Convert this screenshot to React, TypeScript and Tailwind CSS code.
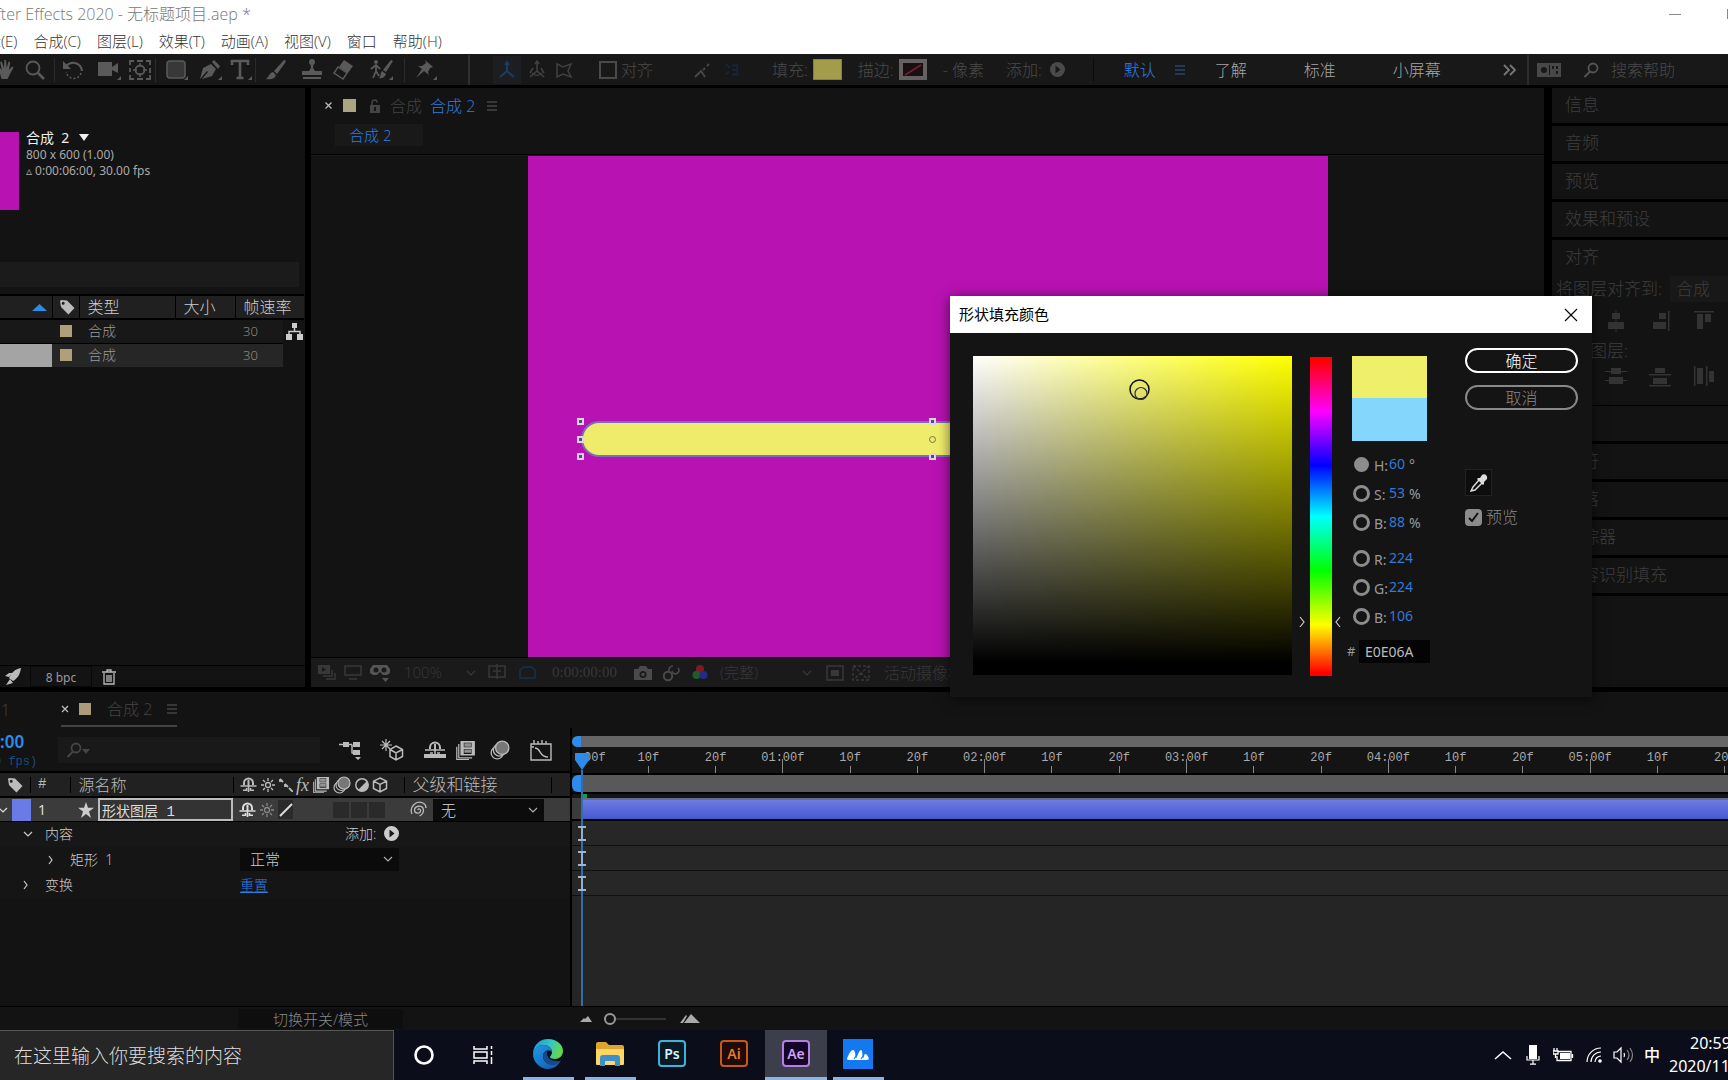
import React from "react";

type IconProps = {
  w?: number;
  h?: number;
  vb?: string;
  className?: string;
  children: React.ReactNode;
};

function Icon({ w = 20, h = 20, vb = "0 0 20 20", className = "", children }: IconProps) {
  return (
    <svg width={w} height={h} viewBox={vb} fill="none" stroke="currentColor" strokeWidth="1.5" className={`block shrink-0 ${className}`} aria-hidden="true">
      {children}
    </svg>
  );
}

const solid = { fill: "currentColor", stroke: "none" };

/* ---------- shared glyphs ---------- */

const Chevron = ({ dir = "down", className = "" }: { dir?: "down" | "right"; className?: string }) => (
  <Icon w={10} h={10} vb="0 0 10 10" className={className}>
    {dir === "down" ? <path d="M1 3l4 4 4-4" strokeWidth="1.2" /> : <path d="M3 1l3 4-3 4" strokeWidth="1.2" />}
  </Icon>
);

const Burger = ({ className = "" }: { className?: string }) => (
  <Icon w={10} h={10} vb="0 0 10 10" className={className}>
    <path d="M0 1h10M0 5h10M0 9h10" strokeWidth="1.4" />
  </Icon>
);

const TagIcon = ({ className = "" }: { className?: string }) => (
  <Icon w={16} h={16} vb="0 0 16 16" className={className}>
    <path {...solid} fillRule="evenodd" d="M1 2l1-1 6 .6L15.5 9 9.5 15.5 2 8zM4.2 2.8a1.5 1.5 0 100 3 1.5 1.5 0 000-3z" />
  </Icon>
);

const ShyIcon = () => (
  <Icon w={17} h={16} vb="0 0 17 16">
    <path d="M4 8V6a4.500 4.500 0 019 0v2" strokeWidth="2" />
    <path {...solid} d="M7.500 3h2v6h-2z" />
    <path d="M0.500 9h16M8.500 9v6M3 13.300h3.500V11M14 13.300h-3.500V11" strokeWidth="1.600" />
  </Icon>
);

const SunIcon = ({ className = "" }: { className?: string }) => (
  <Icon w={14} h={14} vb="0 0 14 14" className={className}>
    <circle cx="7" cy="7" r="2.5" strokeWidth="1.3" />
    <path d="M7 0v3M7 11v3M0 7h3M11 7h3M2 2l2 2M10 10l2 2M12 2l-2 2M4 10l-2 2" strokeWidth="1.3" />
  </Icon>
);

const FilmIcon = ({ size = 17 }: { size?: number }) => (
  <Icon w={size} h={size} vb="0 0 18 18">
    <path {...solid} fillRule="evenodd" d="M4 1h13v13H4zM7 2.5v4h7v-4zM7 8v4.500h7V8z" />
    <path d="M7.5 4.500h6M7.5 10h6" strokeWidth="3" opacity=".75" />
    <path d="M2.500 3.500v12.500h12M.7 6v11.700h11" strokeWidth="1.1" />
  </Icon>
);

const BlurIcon = ({ size = 18 }: { size?: number }) => (
  <Icon w={size} h={size} vb="0 0 18 18">
    <circle cx="6.5" cy="11.5" r="5.5" strokeWidth="1.2" />
    <circle cx="8.5" cy="9" r="5.5" strokeWidth="1.2" fill="#1c1c1c" />
    <circle cx="11" cy="7" r="6" fill="#777" strokeWidth="1.2" />
  </Icon>
);

const CubeIcon = ({ size = 16 }: { size?: number }) => (
  <Icon w={size} h={size} vb="0 0 16 16">
    <path d="M8 1l6.500 3.200v7.300L8 15l-6.500-3.500V4.200zM1.500 4.200L8 7.500l6.500-3.300M8 7.500V15" />
  </Icon>
);

const Search = ({ className = "" }: { className?: string }) => (
  <Icon w={16} h={16} vb="0 0 16 16" className={className}>
    <circle cx="10" cy="6" r="4.500" strokeWidth="1.8" />
    <path d="M7 9.500L1.500 15" strokeWidth="2" />
  </Icon>
);

const PlayDisc = ({ className = "" }: { className?: string }) => (
  <Icon w={15} h={15} vb="0 0 15 15" className={className}>
    <path {...solid} fillRule="evenodd" d="M7.500 0a7.500 7.500 0 100 15 7.500 7.500 0 000-15zM5.500 3.500l5 4-5 4z" />
  </Icon>
);

/* ---------- window title and menus ---------- */

const menus = ["合成(C)", "图层(L)", "效果(T)", "动画(A)", "视图(V)", "窗口", "帮助(H)"];

function TitleArea() {
  return (
    <header className="h-[54px] shrink-0 overflow-hidden bg-white">
      <div className="flex h-7 items-center justify-between">
        <h1 className="-ml-1 whitespace-nowrap font-['Open_Sans','Noto_Sans_CJK_SC',sans-serif] text-[16px] font-light text-[#777]">
          fter Effects 2020 - 无标题项目.aep *
        </h1>
        <div className="flex items-center text-[#888]">
          <button aria-label="最小化" className="mr-[46px] h-px w-3 bg-[#888]" />
          <button aria-label="最大化" className="h-2.5 w-px bg-[#888]" />
        </div>
      </div>
      <nav className="flex h-[26px] items-center gap-4 whitespace-nowrap text-[15px] font-light text-[#333]">
        <button className="-ml-[14px]">辑(E)</button>
        {menus.map((m) => (
          <button key={m}>{m}</button>
        ))}
      </nav>
    </header>
  );
}

/* ---------- toolbar ---------- */

const Corner = () => <path {...solid} d="M24 21v-4l-4 4z" />;

const ToolDivider = () => <div className="h-6 w-px shrink-0 bg-[#2b2b2b]" />;

function Tool({ label, children, className = "w-[31px]" }: { label: string; children: React.ReactNode; className?: string }) {
  return (
    <button aria-label={label} className={`flex shrink-0 items-center justify-center ${className}`}>
      <Icon w={24} h={22} vb="0 0 24 22">
        {children}
      </Icon>
    </button>
  );
}

function Toolbar() {
  return (
    <div className="flex h-[34px] shrink-0 items-center overflow-hidden whitespace-nowrap border-b-[3px] border-black bg-[#181818] text-[16px] font-light text-[#4a4a4a]">
      <div className="flex w-[493px] shrink-0 items-center text-[#5a5a5a]">
        <Tool label="手形工具" className="-ml-1 w-5">
          <path {...solid} d="M5 11L3 8l1.500-1L8 11 6 3l1.800-.4L10 9l.3-8h1.800l.5 8 2-6.500 1.600.6L15 11l3-3.500 1.500 1L16 15l-2.500 5h-6z" />
        </Tool>
        <Tool label="缩放工具" className="w-[38px]">
          <circle cx="10" cy="9" r="6.500" strokeWidth="1.8" />
          <path d="M15 14l6 6" strokeWidth="2.5" />
        </Tool>
        <ToolDivider />
        <Tool label="旋转工具" className="w-[38px]">
          <path d="M4 7c6-6 15-3 16 5" strokeWidth="2" />
          <path {...solid} d="M1 2v8h8z" />
          <path d="M19 14c-2 7-12 8-15-1" strokeDasharray="2 2" />
        </Tool>
        <Tool label="摄像机工具">
          <path {...solid} d="M1 3h14v5l6-4v10l-6-3v6H1z" />
          <Corner />
        </Tool>
        <Tool label="锚点工具">
          <path d="M2 6V2h4M9 2h6M18 2h4v4M22 9v5M22 16v4h-4M15 20H9M6 20H2v-4M2 13V9" strokeWidth="1.8" />
          <circle cx="12" cy="11" r="4.500" strokeWidth="1.8" />
          <path d="M12 4v4M12 14v4M5 11h4M15 11h4" />
        </Tool>
        <ToolDivider />
        <Tool label="矩形工具" className="w-[39px]">
          <rect x="3" y="2" width="18" height="17" rx="3" fill="#383838" />
          <Corner />
        </Tool>
        <Tool label="钢笔工具" className="w-[30px]">
          <path {...solid} d="M2 20L5 9l8-4 5 5-4 7-10 3 6-7-1-1-6 7zM14 3l2-2 6 6-2 3z" />
          <Corner />
        </Tool>
        <Tool label="文字工具" className="w-[30px]">
          <path d="M4 6V2h16v4M12 2v17M8.500 19h7" strokeWidth="2.6" />
          <Corner />
        </Tool>
        <ToolDivider />
        <Tool label="画笔工具" className="w-10">
          <path {...solid} d="M20 1c2 0 2 1 1 3l-8 11-3-3zM9 13l3 3c-1 4-5 5-10 4 3-2 3-6 7-7z" />
        </Tool>
        <Tool label="仿制图章工具">
          <path {...solid} d="M10 1h4l-1 8 2 3h7v4H2v-4h7l2-3zM3 18h18v2H3z" />
          <circle {...solid} cx="12" cy="3" r="3" />
        </Tool>
        <Tool label="橡皮擦工具">
          <path {...solid} d="M13 1l9 6-5 7-9-6z" />
          <path d="M7 8l9 6-4 6-9-6z" />
        </Tool>
        <Tool label="Roto 笔刷工具" className="w-[46px]">
          <circle {...solid} cx="7" cy="3" r="2" />
          <path d="M7 6v6l-3 7M7 12l3 5M2 10l5-4 4 4" strokeWidth="1.8" />
          <path {...solid} d="M22 1l2 1-7 11-3-2zM13 12l4 3c-1 3-4 5-7 4 2-1 1-5 3-7z" />
          <Corner />
        </Tool>
        <ToolDivider />
        <Tool label="人偶位控点工具" className="w-[39px]">
          <path {...solid} d="M12 1l8 7-3 1-2 4 1 3-5-4-8 7 6-9-4-3 4 0 4-3z" />
          <Corner />
        </Tool>
        <div className="ml-6 h-[30px] w-0.5 bg-[#303030]" />
      </div>
      <div className="flex w-[106px] shrink-0 items-center gap-1.5 text-[#404040]">
        <button aria-label="本地轴模式" className="flex h-7 w-7 items-center justify-center bg-[#1c1e22] text-[#1c3c60]">
          <Icon w={20}><path d="M10 2v9l-7 6M10 11l7 6M8 5l2-3 2 3" strokeWidth="2" /></Icon>
        </button>
        <button aria-label="世界轴模式">
          <Icon><path d="M10 2v9l-7 6M10 11l7 6M8 4l2-3 2 3M5 13c3 3 7 3 10 0M6 8l-3 5M14 8l3 5" strokeWidth="1.6" /></Icon>
        </button>
        <button aria-label="视图轴模式">
          <Icon w={22}><path d="M3 4l6 3 8-3-3 7 3 6-8-3-6 3z" /></Icon>
        </button>
      </div>
      <label className="flex w-[94px] shrink-0 items-center gap-1">
        <input type="checkbox" className="h-[18px] w-[18px] appearance-none border-2 border-[#4a4a4a] bg-transparent" />
        对齐
      </label>
      <div className="flex w-[79px] shrink-0 items-center gap-2.5">
        <Icon w={20}><path d="M2 17l6-6 4 6M10 10l2-2M14 6l2-2" strokeWidth="1.8" /></Icon>
        <Icon w={18} className="text-[#16263a]"><path d="M3 3l5 5M3 15l4-3M10 5h6v10h-6M10 10h5" strokeWidth="2" /></Icon>
      </div>
      <div className="flex shrink-0 items-center">
        <span>填充:</span>
        <button aria-label="填充颜色" className="ml-[5px] h-[21px] w-[29px] border border-[#837f4a] bg-[#a39c4b]" />
        <span className="ml-4">描边:</span>
        <button aria-label="描边颜色" className="ml-[5px] flex h-[21px] w-[28px] items-center justify-center border-4 border-[#656062] bg-[#181012]">
          <Icon w={20} h={12} vb="0 0 20 12" className="text-[#722330]"><path d="M2 11L18 1" /></Icon>
        </button>
        <span className="ml-4">- 像素</span>
        <span className="ml-[22px]">添加:</span>
        <PlayDisc className="ml-2" />
      </div>
      <div className="ml-7 h-6 w-px bg-[#0c0c0c]" />
      <nav className="ml-[30px] flex shrink-0 items-center text-[#a6a6a6]">
        <button className="text-[#2d7fe0]">默认</button>
        <Burger className="ml-[19px] text-[#24466c]" />
        <button className="ml-[30px]">了解</button>
        <button className="ml-[57px]">标准</button>
        <button className="ml-[57px]">小屏幕</button>
      </nav>
      <div className="ml-auto flex w-[225px] shrink-0 items-center">
        <Icon w={14} h={12} vb="0 0 14 12" className="text-[#777]"><path d="M1 1l5 5-5 5M7 1l5 5-5 5" strokeWidth="1.8" /></Icon>
        <div className="ml-2.5 h-[30px] w-0.5 bg-[#2c2c2c]" />
        <Icon w={24} h={14} vb="0 0 24 14" className="ml-2 text-[#484848]">
          <path {...solid} fillRule="evenodd" d="M0 0h24v14H0zM4 7a3 3 0 106 0 3 3 0 00-6 0zM12 2v10h1V2zM15 3v3h2V3zM19 8v3h2V8zM19 3v3h2V3z" />
        </Icon>
        <Search className="ml-[22px] text-[#555]" />
        <input aria-label="搜索帮助" placeholder="搜索帮助" className="ml-3 w-[100px] bg-transparent text-[16px] font-light outline-none placeholder:text-[#4a4a4a]" />
      </div>
    </div>
  );
}

/* ---------- project panel ---------- */

function ProjectPanel() {
  return (
    <aside className="flex w-[305px] shrink-0 flex-col overflow-hidden bg-[#131313]">
      <div className="mt-[42px] flex items-start">
        <div className="mt-0.5 h-[78px] w-[19px] shrink-0 bg-[#b812b2]" />
        <div className="ml-[7px] font-['Noto_Sans','Noto_Sans_CJK_SC',sans-serif] text-[12px] leading-4 text-[#aaa]">
          <div className="flex h-4 items-center gap-2.5 text-[14px] text-[#eee]">
            <span>合成&nbsp; 2</span>
            <Icon w={10} h={8} vb="0 0 10 8"><path {...solid} d="M0 0h10L5 7z" /></Icon>
          </div>
          <p className="mt-px">800 x 600 (1.00)</p>
          <p>▵ 0:00:06:00, 30.00 fps</p>
        </div>
      </div>
      <input aria-label="搜索项目" className="mt-[52px] h-[25px] w-[299px] bg-[#1b1b1b] outline-none" />
      <table className="mt-[7px] w-[304px] table-fixed border-collapse text-left text-[14px] font-light leading-5 text-[#999]">
        <colgroup>
          <col className="w-[52px]" />
          <col className="w-[27px]" />
          <col className="w-[96px]" />
          <col className="w-[60px]" />
          <col className="w-[48px]" />
          <col className="w-[21px]" />
        </colgroup>
        <thead className="border-y-2 border-black bg-[#202020] text-[16px] text-[#ccc]">
          <tr className="h-[24px]">
            <th aria-label="名称" className="border-r border-black p-0 pl-8">
              <Icon w={15} h={7} vb="0 0 15 7" className="text-[#2d8ceb]"><path {...solid} d="M0 7l7.500-7L15 7z" /></Icon>
            </th>
            <th aria-label="标签" className="border-r border-black p-0 pl-1.5"><TagIcon className="text-[#bbb]" /></th>
            <th className="border-r border-black p-0 pl-2 font-light">类型</th>
            <th className="border-r border-black p-0 pl-2 font-light">大小</th>
            <th colSpan={2} className="p-0 pl-2 font-light">帧速率</th>
          </tr>
        </thead>
        <tbody>
          {[false, true].map((selected, i) => (
            <tr key={i} className="h-6">
              <td className={selected ? "border-t border-black bg-[#a4a4a4] p-0" : "bg-[#181818] p-0"} />
              <td className={selected ? "border-t border-black bg-[#262626] p-0 pl-2" : "bg-[#181818] p-0 pl-2"}>
                <div className="h-3 w-3 bg-[#af9f7b]" />
              </td>
              <td className={selected ? "border-t border-black bg-[#262626] p-0 pl-[9px]" : "bg-[#181818] p-0 pl-[9px]"}>合成</td>
              <td className={selected ? "border-t border-black bg-[#262626] p-0" : "bg-[#181818] p-0"} />
              <td className={selected ? "border-t border-black bg-[#262626] p-0 pl-2 text-[13px]" : "bg-[#181818] p-0 pl-2 text-[13px]"}>30</td>
              <td className="p-0 pl-[3px]">
                {!selected && (
                  <Icon w={17} h={17} vb="0 0 17 17" className="text-[#ccc]">
                    <path {...solid} d="M6 0h5v5H6zM0 11h6v6H0zM11 11h6v6h-6z" />
                    <path d="M8.500 4v5M3 12V8.500h11V12" />
                  </Icon>
                )}
              </td>
            </tr>
          ))}
        </tbody>
      </table>
      <div className="mt-auto flex h-[22px] items-center border-t border-black text-[#bbb]">
        <Icon w={18} h={18} vb="0 0 18 18" className="ml-1">
          <path {...solid} d="M17 0c-1 7-4 11-8 13L5 10C8 4 11 1 17 0zM5 5l3 0-3 4-4-1zM9 15l-3-4-4 6z" />
        </Icon>
        <button className="ml-2 h-[21px] w-[62px] border border-[#080808] pt-0.5 font-['Noto_Sans',sans-serif] text-[12px] leading-4 text-[#999]">8 bpc</button>
        <button aria-label="删除" className="ml-2.5">
          <Icon w={14} h={16} vb="0 0 14 16">
            <path d="M0 3h14M5 2.500V1h4v1.500M2 4v11h10V4M5 6v7M7 6v7M9 6v7" strokeWidth="1.3" />
          </Icon>
        </button>
      </div>
    </aside>
  );
}

/* ---------- composition viewer ---------- */

const Handle = () => <div className="h-[7px] w-[7px] border-2 border-[#d9d5e6] bg-[#554a80]" />;

function CompositionPanel() {
  return (
    <main className="flex min-w-0 flex-1 flex-col overflow-hidden bg-[#131313] text-[16px] font-light">
      <div className="flex h-[35px] shrink-0 items-center pl-3.5 text-[#444]">
        <button aria-label="关闭" className="text-[#bbb]">
          <Icon w={7} h={7} vb="0 0 7 7"><path d="M.5 .5l6 6M6.500 .5l-6 6" strokeWidth="1.3" /></Icon>
        </button>
        <div className="ml-[11px] h-[13px] w-[13px] bg-[#a9a482]" />
        <Icon w={12} h={14} vb="0 0 12 14" className="ml-[13px]">
          <path {...solid} fillRule="evenodd" d="M1 6h10v8H1zM5 8v4h2V8z" />
          <path d="M3 6V3.500a2.500 2.500 0 015 0" />
        </Icon>
        <span className="ml-[9px]">合成</span>
        <span className="ml-2 text-[#2d7fe0]">合成 2</span>
        <Burger className="ml-3" />
      </div>
      <div className="flex h-[32px] shrink-0 items-center border-b border-black pb-2 pl-6">
        <button className="h-[22px] w-[88px] bg-[#191919] pl-3.5 text-left text-[15px] leading-[22px] text-[#2d7fe0]">合成 2</button>
      </div>
      <div className="flex min-h-0 flex-1 justify-center overflow-hidden border-t border-[#1c1c1c]">
        <div className="w-[800px] shrink-0 overflow-hidden bg-[#b812b2] pt-[265px]">
          <div className="relative ml-[53px] h-[36px] w-[702px]">
            <div className="h-full rounded-full border-2 border-[#7d6cc0] bg-[#efec6c]" />
            <div className="absolute -bottom-[3px] -left-1 -top-[3px] grid w-[359px] grid-cols-[7px_7px] content-between justify-between">
              <Handle />
              <Handle />
              <Handle />
              <div className="h-[7px] w-[7px] rounded-full border border-[#77754a]" />
              <Handle />
              <Handle />
            </div>
          </div>
        </div>
      </div>
      <div className="flex h-[30px] shrink-0 items-center overflow-hidden whitespace-nowrap border-t border-black bg-[#1a1a1a] pl-[7px] text-[15px] text-[#383838]">
        <Icon w={18} h={16} vb="0 0 18 16"><path {...solid} fillRule="evenodd" d="M0 0h12v9H0zM4 2v5l4-2.500z" /><path d="M14 5v6H5M17 8v6H8" /></Icon>
        <Icon w={18} h={16} vb="0 0 18 16" className="ml-2"><path d="M1 1h16v9H1zM5 14h8" /></Icon>
        <Icon w={20} h={18} vb="0 0 20 18" className="ml-2 text-[#555]">
          <path {...solid} fillRule="evenodd" d="M3 1h14l3 4v4l-3 2h-4l-3-3-3 3H3L0 9V5zM3.500 6a2.500 2.500 0 105 0 2.500 2.500 0 00-5 0zM11.500 6a2.500 2.500 0 105 0 2.500 2.500 0 00-5 0zM12 14h7l-3.500 4z" />
        </Icon>
        <button className="ml-3.5 flex w-[72px] items-center justify-between">100%<Chevron /></button>
        <Icon w={18} h={18} vb="0 0 18 18" className="ml-3"><path d="M1 2h16v11H1zM9 0v15M5 7h8" /></Icon>
        <Icon w={18} h={16} vb="0 0 18 16" className="ml-3 text-[#162a44]"><path d="M2 5l4-3h7l4 3v8H2z" strokeWidth="2" /></Icon>
        <span className="ml-4 w-[70px] font-['Liberation_Serif',serif] text-[15px]">0:00:00:00</span>
        <Icon w={18} h={16} vb="0 0 18 16" className="ml-3 text-[#4a4a4a]"><path {...solid} fillRule="evenodd" d="M0 4h4l2-3h6l2 3h4v11H0zM5.500 9.500a3.500 3.500 0 107 0 3.500 3.500 0 00-7 0zM7.500 8h3v3h-3z" /></Icon>
        <Icon w={18} h={18} vb="0 0 18 18" className="ml-2.5 text-[#4a4a4a]"><circle cx="6" cy="12" r="4.200" strokeWidth="2" /><path d="M7 7a4 4 0 014-5M10 7a3.500 3.500 0 106-3" strokeWidth="1.6" /></Icon>
        <svg width="16" height="18" viewBox="0 0 16 18" className="ml-3 shrink-0" aria-hidden="true">
          <circle cx="8" cy="5" r="4" fill="#7d1c20" />
          <circle cx="4.500" cy="11" r="4" fill="#1e5c2c" />
          <circle cx="11.500" cy="11" r="4" fill="#252a86" />
        </svg>
        <button className="ml-3 flex w-[92px] items-center justify-between">(完整)<Chevron /></button>
        <Icon w={18} h={16} vb="0 0 18 16" className="ml-3.5"><path d="M1 1h16v14H1z" /><path {...solid} d="M5 5h8v6H5z" /></Icon>
        <Icon w={18} h={16} vb="0 0 18 16" className="ml-2"><path d="M1 1h16v14H1zM1 1l16 14M17 1L1 15" strokeDasharray="3 2" /></Icon>
        <span className="ml-3.5 text-[16px]">活动摄像机</span>
      </div>
    </main>
  );
}

/* ---------- right panels ---------- */

function PanelTitle({ children }: { children: React.ReactNode }) {
  return <h2 className="h-[38px] shrink-0 border-b-[3px] border-black pl-[13px] text-[17px] leading-[34px]">{children}</h2>;
}

function AlignIcon({ d }: { d: string }) {
  return (
    <button className="flex w-11 justify-center" aria-label="对齐图层">
      <Icon w={22} h={22} vb="0 0 22 22"><path d={d} {...solid} /></Icon>
    </button>
  );
}

function SidePanels() {
  return (
    <aside className="ml-2 flex w-[176px] shrink-0 flex-col overflow-hidden whitespace-nowrap bg-[#131313] font-light text-[#3e3e3e]">
      {["信息", "音频", "预览", "效果和预设"].map((t, i) => (
        <PanelTitle key={i}>{t}</PanelTitle>
      ))}
      <section className="h-[166px] shrink-0 border-b border-black text-[17px]">
        <h2 className="h-[36px] pl-[13px] leading-[34px]">对齐</h2>
        <label className="flex h-[26px] items-center pl-1">
          将图层对齐到:
          <select className="ml-2 w-20 appearance-none bg-[#181818] pl-1.5 text-[17px]"><option>合成</option></select>
        </label>
        <div className="-ml-0.5 flex h-[38px] w-[176px] items-center text-[#333]">
          <AlignIcon d="M2 1h1.500v20H2zM5 4h7v6H5zM5 12h12v6H5z" />
          <AlignIcon d="M10.500 0h1v22h-1zM7 3h8v6H7zM3 12h16v7H3z" />
          <AlignIcon d="M19 1h1.500v20H19zM10 3h7v6h-7zM4 12h13v7H4z" />
          <AlignIcon d="M1 1h20v1.500H1zM4 4h6v15H4zM12 4h6v8h-6z" />
        </div>
        <p className="h-[22px] pl-1 leading-[22px]">分布图层:</p>
        <div className="-ml-0.5 flex h-[28px] w-[176px] items-center text-[#333]">
          <AlignIcon d="M1 2h20v1.500H1zM5 5h12v5H5zM1 12h20v1.500H1zM5 15h12v5H5z" />
          <AlignIcon d="M0 6h22v1H0zM6 3h10v6H6zM0 15h22v1H0zM4 12h14v7H4z" />
          <AlignIcon d="M0 9h22v1.500H0zM6 3h10v5H6zM0 20h22v1.500H0zM4 13h14v6H4z" />
          <AlignIcon d="M1 1h1.500v20H1zM4 3h6v16H4zM13 1h1.500v20H13zM16 6h5v11h-5z" />
        </div>
      </section>
      {["库", "字符", "段落", "跟踪器", "内容识别填充"].map((t, i) => (
        <PanelTitle key={i}>{t}</PanelTitle>
      ))}
    </aside>
  );
}

/* ---------- colour picker dialog ---------- */

const channels = [
  { id: "h", label: "H:", value: "60", unit: "°" },
  { id: "s", label: "S:", value: "53", unit: "%" },
  { id: "br", label: "B:", value: "88", unit: "%" },
  { id: "r", label: "R:", value: "224", unit: "" },
  { id: "g", label: "G:", value: "224", unit: "" },
  { id: "b", label: "B:", value: "106", unit: "" },
];

function ColorDialog() {
  return (
    <div role="dialog" aria-label="形状填充颜色" className="absolute left-[950px] top-[296px] z-20 h-[401px] w-[642px] bg-[#141414] shadow-[0_2px_12px_rgba(0,0,0,0.6)]">
      <div className="flex h-[37px] items-center justify-between bg-white pl-[9px] pr-3.5 text-[15px] text-black">
        <h2>形状填充颜色</h2>
        <button aria-label="关闭">
          <Icon w={14} h={14} vb="0 0 14 14"><path d="M1 1l12 12M13 1L1 13" strokeWidth="1.1" /></Icon>
        </button>
      </div>
      <div className="flex pl-[23px] pt-[23px]">
        <div className="h-[319px] w-[319px] bg-[linear-gradient(to_top,#000_4%,transparent),linear-gradient(to_right,#fff,#ff0)]">
          <svg width="24" height="26" viewBox="0 0 24 26" className="relative left-[155px] top-[22px]" fill="none" aria-hidden="true">
            <circle cx="11.500" cy="11.500" r="9.500" stroke="#111" strokeWidth="1.5" />
            <circle cx="13" cy="15.500" r="6" stroke="#333" strokeWidth="1.2" />
          </svg>
        </div>
        <div className="ml-[5px] mt-px flex h-[319px] items-start text-[#ccc]">
          <Icon w={10} h={12} vb="0 0 10 12" className="mt-[259px]"><path d="M3 1l4 5-4 5" strokeWidth="1.2" /></Icon>
          <div className="ml-[3px] h-[319px] w-[22px] bg-[linear-gradient(to_bottom,#f00_1%,#f0f_17%,#00f_34%,#0ff_50%,#0f0_67%,#ff0_84%,#f00_99%)]" />
          <Icon w={10} h={12} vb="0 0 10 12" className="ml-px mt-[259px]"><path d="M7 1L3 6l4 5" strokeWidth="1.2" /></Icon>
        </div>
        <div className="ml-1 w-[83px]">
          <div className="ml-[5px] h-[42px] w-[75px] bg-[#eff069]" />
          <div className="ml-[5px] h-[43px] w-[75px] bg-[#85d6fd]" />
          <div className="ml-[6px] mt-[9px] flex flex-col font-['Noto_Sans',sans-serif] text-[14px] text-[#999]">
            {channels.map((c, i) => (
              <div key={c.id} className={i === 3 ? "mt-[7px] flex h-[29px] items-center" : "flex h-[29px] items-center"}>
                <input
                  type="radio"
                  name="channel"
                  id={`ch-${c.id}`}
                  defaultChecked={i === 0}
                  className="h-[17px] w-[17px] appearance-none rounded-full border-[3px] border-[#8c8c8c] checked:mx-px checked:h-[15px] checked:w-[15px] checked:bg-[#8c8c8c]"
                />
                <label htmlFor={`ch-${c.id}`} className="ml-1 w-[15px] whitespace-nowrap pt-0.5">{c.label}</label>
                <span className={c.unit ? "w-5 pb-0.5 text-[#3379d8]" : "w-8 pb-0.5 text-[#3379d8]"}>{c.value}</span>
                <span>{c.unit}</span>
              </div>
            ))}
          </div>
          <label className="mt-[9px] flex items-center gap-1 font-['Noto_Sans',sans-serif] text-[13px] text-[#999]">
            <span className="w-2">#</span>
            <input defaultValue="E0E06A" className="h-[23px] w-[71px] bg-[#040404] pl-1.5 text-[14px] text-[#bbb] outline-none" />
          </label>
        </div>
        <div className="ml-[35px] flex flex-col items-start text-[16px] font-light text-[#888]">
          <button className="-mt-2 h-[25px] w-[113px] rounded-full border-2 border-white leading-[20px] text-white">确定</button>
          <button className="mt-3 h-[25px] w-[113px] rounded-full border-2 border-[#888] leading-[20px]">取消</button>
          <button aria-label="吸管" className="mt-[59px] flex h-[27px] w-[27px] items-center justify-center border border-[#222] bg-[#0d0d0d] text-[#ddd]">
            <Icon w={18} h={18} vb="0 0 18 18">
              <path {...solid} d="M12 1c3-2 6 1 5 4l-3 3 0 2-1 1-6-6 1-1h2z" />
              <path d="M9 6l-6 7-2 4 4-1 7-7" strokeWidth="1.4" />
            </Icon>
          </button>
          <label className="mt-[9px] flex items-center gap-1">
            <span className="relative block h-[17px] w-[17px]">
              <input type="checkbox" defaultChecked className="block h-[17px] w-[17px] appearance-none rounded-sm bg-[#8c8c8c]" />
              <Icon w={17} h={17} vb="0 0 17 17" className="pointer-events-none absolute inset-0 text-[#111]"><path d="M4 9l3 3 6-8" strokeWidth="2" /></Icon>
            </span>
            预览
          </label>
        </div>
      </div>
    </div>
  );
}

/* ---------- timeline ---------- */

function TimelineTabs() {
  return (
    <div className="flex h-9 shrink-0 items-center text-[16px] font-light text-[#444]">
      <span className="w-[61px] pl-px">1</span>
      <div className="flex h-[33px] w-[116px] items-center border-b-2 border-[#444]">
        <button aria-label="关闭" className="text-[#bbb]">
          <Icon w={8} h={8} vb="0 0 8 8"><path d="M1 1l6 6M7 1L1 7" strokeWidth="1.3" /></Icon>
        </button>
        <div className="ml-2.5 h-3 w-3 bg-[#ab9b7c]" />
        <span className="ml-4">合成 2</span>
        <Burger className="ml-auto" />
      </div>
    </div>
  );
}

function TimelineControls() {
  return (
    <div className="flex h-[43px] items-start text-[#bbb]">
      <div className="w-[58px] shrink-0 overflow-hidden whitespace-nowrap">
        <div className="mt-1 h-5 font-['Noto_Sans',sans-serif] text-[17px] font-semibold leading-5 text-[#2d8ceb]">:00</div>
        <div className="-ml-1.5 font-['Liberation_Mono',monospace] text-[12px] leading-5 text-[#1d4a7c]">0 fps)</div>
      </div>
      <label className="mt-[9px] flex h-[26px] w-[262px] shrink-0 items-center bg-[#191919] pl-2 text-[#444]">
        <Search />
        <Icon w={8} h={6} vb="0 0 8 6" className="mt-1"><path {...solid} d="M0 0h8L4 5z" /></Icon>
        <input aria-label="搜索图层" className="min-w-0 flex-1 bg-transparent outline-none" />
      </label>
      <div className="ml-[19px] mt-[11px] flex shrink-0 items-center">
        <button aria-label="合成微型流程图">
          <Icon w={23} h={20} vb="0 0 23 20"><path d="M0 4.500h13M13 4.500v9M13 13h3" /><path {...solid} d="M4 2h6v5H4zM14 2h7v5h-7zM14 10h7v5h-7zM16 17h6l-3 3z" /></Icon>
        </button>
        <button aria-label="草图 3D" className="ml-[18px]">
          <Icon w={24} h={22} vb="0 0 24 22"><path d="M6 0v12M0 6h12M2 2l8 8M10 2l-8 8" strokeWidth="1.2" /><path d="M16 7l6.500 3.500v7L16 21l-6-3.500v-7zM10 10.500l6 3.500 6.500-3.500M16 14v7" /></Icon>
        </button>
        <button aria-label="隐藏图层" className="ml-5">
          <Icon w={22} h={20} vb="0 0 22 20"><path d="M6 9V7.500a5 5 0 0110 0V9" strokeWidth="2" /><path {...solid} d="M10 4h2v6h-2zM0 14h22v4H0z" /><path d="M1 10h20M11 9v5M6 13h3M13 13h3" /></Icon>
        </button>
        <button aria-label="帧混合" className="ml-2.5"><FilmIcon size={20} /></button>
        <button aria-label="运动模糊" className="ml-3.5"><BlurIcon size={20} /></button>
        <button aria-label="图表编辑器" className="ml-5">
          <Icon w={22} h={21} vb="0 0 22 21"><path d="M1 4h20v16H1zM4 0v4M8 1v3M12 0v4M16 1v3M1 7h3M5 8c6 0 4 9 13 9" strokeWidth="1.4" /></Icon>
        </button>
      </div>
    </div>
  );
}

function LayerColumn() {
  return (
    <div className="flex w-[572px] shrink-0 flex-col overflow-hidden whitespace-nowrap border-r-2 border-black">
      <TimelineControls />
      <div className="flex h-[27px] shrink-0 items-center border-y-2 border-black bg-[#212121] text-[16px] font-light text-[#bbb]">
        <TagIcon className="ml-[7px]" />
        <div className="ml-[7px] h-4 w-px bg-black" />
        <span className="ml-[7px] font-['Liberation_Mono',monospace] text-[14px]">#</span>
        <div className="ml-[24px] h-4 w-px bg-black" />
        <span className="ml-[7px] w-[155px]">源名称</span>
        <div className="h-4 w-px bg-black" />
        <div className="ml-1.5 flex w-[148px] items-center justify-between">
          <ShyIcon />
          <SunIcon />
          <Icon w={14} h={14} vb="0 0 14 14"><path d="M1 1l3 3M6 6l3 3M10 10l4 4M1 1v3M6 6v3" strokeWidth="1.8" /></Icon>
          <span className="font-['Liberation_Serif',serif] text-[18px] italic leading-4">fx</span>
          <FilmIcon />
          <BlurIcon />
          <Icon w={14} h={14} vb="0 0 14 14"><circle cx="7" cy="7" r="6.200" /><path {...solid} d="M12 3L3 12a6.500 6.500 0 009-9z" /></Icon>
          <CubeIcon />
        </div>
        <div className="ml-4 h-4 w-px bg-black" />
        <span className="ml-[7px] text-[17px]">父级和链接</span>
        <div className="ml-auto mr-[18px] h-4 w-px bg-black" />
      </div>
      <div className="flex h-[23px] shrink-0 items-center bg-[#3b3b3b] text-[14px] text-[#ddd]">
        <Chevron className="-ml-0.5" />
        <div className="ml-1 h-[22px] w-[19px] bg-[#6a7be8]" />
        <span className="ml-[7px] w-10 font-['Noto_Sans',sans-serif]">1</span>
        <Icon w={16} h={16} vb="0 0 16 16" className="text-[#ccc]"><path {...solid} d="M8 0l2 5.800h6l-5 3.600L13 16l-5-4-5 4 2-6.600L0 5.800h6z" /></Icon>
        <input aria-label="图层名称" defaultValue="形状图层 1" className="ml-1 h-[23px] w-[135px] border-2 border-[#bcbcbc] bg-[#333] pl-0.5 font-['Liberation_Mono','Noto_Sans_CJK_SC',monospace] text-[14px] outline-none" />
        <div className="ml-1.5 flex w-[54px] items-center gap-1">
          <ShyIcon />
          <SunIcon className="text-[#888]" />
          <div className="flex h-[19px] w-[15px] items-center justify-center bg-[#2a2a2a]">
            <Icon w={15} h={15} vb="0 0 15 15"><path d="M2 14L14 2" strokeWidth="2" /></Icon>
          </div>
        </div>
        <div className="ml-[40px] flex gap-0.5">
          <div className="h-4 w-4 bg-[#2a2a2a]" />
          <div className="h-4 w-4 bg-[#2a2a2a]" />
          <div className="h-4 w-4 bg-[#2a2a2a]" />
        </div>
        <Icon w={17} h={17} vb="0 0 17 17" className="ml-[25px] text-[#bbb]">
          <path d="M8 9c0-2 3-1 2.500 1-.5 3-6 3-6-1C4.500 5 13 3 13.500 9c0 3-2 5-4 6M2 13C-1 6 6-1 13 2c2 1 3 3 3 5" strokeWidth="1.3" />
        </Icon>
        <label className="relative ml-1.5 h-[22px] w-[111px]">
          <select aria-label="父级和链接" className="h-full w-full appearance-none bg-[#0c0c0c] pl-2 text-[15px] font-light outline-none"><option>无</option></select>
          <Chevron className="pointer-events-none absolute right-1.5 top-1.5 text-[#aaa]" />
        </label>
      </div>
      <div className="flex h-[26px] shrink-0 items-center border-t border-black bg-[#171717] pb-0.5 pl-[23px] text-[14px] font-light text-[#ccc]">
        <Chevron />
        <span className="ml-3 w-[300px]">内容</span>
        <span>添加:</span>
        <PlayDisc className="ml-2" />
      </div>
      <div className="flex h-[25px] shrink-0 items-center bg-[#151515] pl-[46px] text-[14px] font-light text-[#ccc]">
        <Chevron dir="right" />
        <span className="ml-3.5 w-[170px]">矩形&nbsp; 1</span>
        <label className="relative h-[23px] w-[159px]">
          <select aria-label="混合模式" className="h-full w-full appearance-none bg-[#0b0b0b] pl-2.5 text-[15px] font-light outline-none"><option>正常</option></select>
          <Chevron className="pointer-events-none absolute right-1.5 top-1.5 text-[#aaa]" />
        </label>
      </div>
      <div className="flex h-[25px] shrink-0 items-center bg-[#151515] pl-[21px] text-[14px] font-light text-[#ccc]">
        <Chevron dir="right" />
        <span className="ml-3.5 w-[195px]">变换</span>
        <button className="text-[#2d7fe0] underline underline-offset-2">重置</button>
      </div>
    </div>
  );
}

const marks = ["00f", "10f", "20f"].concat(
  ["01", "02", "03", "04", "05"].flatMap((s) => [`${s}:00f`, "10f", "20f"])
);

const IBeam = () => (
  <Icon w={10} h={15} vb="0 0 10 15" className="z-10 text-[#9db6d3]">
    <path d="M1 1h8M1 14h8M5 1v13" strokeWidth="1.8" />
  </Icon>
);

function TrackColumn() {
  return (
    <div className="relative flex min-w-0 flex-1 flex-col overflow-hidden">
      <div className="mt-2 flex h-[11px] shrink-0">
        <div className="h-full w-[9px] rounded-l-md bg-[#2d8ceb]" />
        <div className="flex-1 bg-[#666]" />
      </div>
      <div className="flex h-[26px] shrink-0 overflow-hidden bg-[#141414] pl-[9px] font-['Liberation_Mono',monospace] text-[12px] text-[#aaa]">
        {marks.map((m, i) => (
          <div key={i} className="flex w-[5.867%] shrink-0">
            <div className={i === 0 ? "flex flex-col pl-[3px]" : "flex w-0 flex-col items-center"}>
              <span className="h-4 whitespace-nowrap leading-[22px]">{m}</span>
              {i > 0 && <div className={i % 3 === 0 ? "-mt-1 h-3.5 w-px shrink-0 bg-[#888]" : "mt-[3px] h-[7px] w-px shrink-0 bg-[#888]"} />}
            </div>
          </div>
        ))}
      </div>
      <div className="flex h-[21px] shrink-0 border-y-2 border-black">
        <div className="w-[9px] rounded-l-md bg-[#2d8ceb]" />
        <div className="flex-1 bg-[#595959]" />
      </div>
      <div className="h-1 shrink-0 bg-[#151515] pl-[9px]"><div className="h-1 w-1.5 bg-[#1d9a3c]" /></div>
      <div className="h-[23px] shrink-0 border-b-2 border-black bg-[#3b3b3b] pl-[9px]">
        <div className="h-[21px] border-t-2 border-[#696c88] bg-linear-to-b from-[#6d7ce0] to-[#4658d0]" />
      </div>
      {[0, 1, 2].map((r) => (
        <div key={r} className="flex h-[25px] shrink-0 items-center border-b border-[#101010] bg-[#272727] pl-[5px]"><IBeam /></div>
      ))}
      <div className="flex-1 bg-[#252525]" />
      <div className="pointer-events-none absolute bottom-0 left-[3px] top-[24px] flex w-[14px] flex-col items-center">
        <svg width="14" height="18" viewBox="0 0 14 18" aria-hidden="true"><path d="M0 1h14v7l-7 10L0 8z" fill="#2d8ceb" /></svg>
        <div className="w-0.5 flex-1 bg-[#2f6fb0]" />
      </div>
    </div>
  );
}

function Timeline() {
  return (
    <section className="flex h-[338px] shrink-0 flex-col bg-[#131313]">
      <TimelineTabs />
      <div className="flex min-h-0 flex-1">
        <LayerColumn />
        <TrackColumn />
      </div>
      <div className="flex h-6 shrink-0 items-center border-t border-black text-[15px] font-light text-[#888]">
        <button className="ml-[238px] h-5 w-[165px] bg-[#0e0e0e] leading-5">切换开关/模式</button>
        <Icon w={12} h={6} vb="0 0 12 6" className="ml-[177px] text-[#aaa]"><path {...solid} d="M0 6l4-4 1 1 3-3 4 6z" /></Icon>
        <input
          type="range"
          aria-label="时间轴缩放"
          defaultValue={0}
          className="ml-3 h-3 w-[62px] appearance-none bg-[linear-gradient(#333,#333)] bg-[length:100%_2px] bg-center bg-no-repeat [&::-webkit-slider-thumb]:h-3 [&::-webkit-slider-thumb]:w-3 [&::-webkit-slider-thumb]:appearance-none [&::-webkit-slider-thumb]:rounded-full [&::-webkit-slider-thumb]:border-2 [&::-webkit-slider-thumb]:border-[#999] [&::-webkit-slider-thumb]:bg-[#131313]"
        />
        <Icon w={20} h={9} vb="0 0 20 9" className="ml-3.5 text-[#aaa]"><path {...solid} d="M0 9l6-8 1 1-4 7zM4 9l7-9 9 9z" /></Icon>
      </div>
    </section>
  );
}

/* ---------- taskbar ---------- */

function TaskButton({ label, active, open, children }: { label: string; active?: boolean; open?: boolean; children: React.ReactNode }) {
  return (
    <button aria-label={label} className={`flex h-full w-[62px] shrink-0 flex-col items-center ${active ? "bg-[#3d3e4c]" : ""}`}>
      <span className="flex flex-1 items-center">{children}</span>
      <span className={`h-[3px] ${active ? "w-full" : "w-[51px]"} ${open ? "bg-[#84b6ea]" : "bg-transparent"}`} />
    </button>
  );
}

function AdobeTile({ name, className }: { name: string; className: string }) {
  return <span className={`flex h-[27px] w-[28px] items-center justify-center rounded border-2 font-['Noto_Sans',sans-serif] text-[14px] font-semibold leading-none ${className}`}>{name}</span>;
}

function Taskbar() {
  return (
    <footer className="flex h-[50px] shrink-0 items-center overflow-hidden whitespace-nowrap bg-[#0b0d1a] text-white">
      <input
        aria-label="搜索"
        placeholder="在这里输入你要搜索的内容"
        className="h-full w-[394px] shrink-0 border-r border-t border-[#555] bg-[#262626] pl-3.5 text-[19px] font-light outline-none placeholder:text-[#ddd]"
      />
      <button aria-label="Cortana" className="flex w-[60px] justify-center">
        <Icon w={20}><circle cx="10" cy="10" r="8.500" strokeWidth="2.6" /></Icon>
      </button>
      <button aria-label="任务视图" className="flex w-[63px] items-center pl-[19px]">
        <Icon w={22} h={20} vb="0 0 22 20">
          <path d="M1 1v3h13V1M1 19v-3h13v3M1 7h13v6H1zM18.500 1v3M18.500 6v4M18.500 12v7" />
        </Icon>
      </button>
      <TaskButton label="Microsoft Edge" open>
        <svg width="30" height="30" viewBox="0 0 30 30" aria-hidden="true">
          <defs>
            <linearGradient id="edge-top" x1="0" y1="0" x2="1" y2="0.3"><stop offset="0" stopColor="#1f8fd8" /><stop offset=".6" stopColor="#36c6c0" /><stop offset="1" stopColor="#62d84e" /></linearGradient>
            <linearGradient id="edge-low" x1="0" y1="0" x2="1" y2="1"><stop offset="0" stopColor="#1f9be8" /><stop offset="1" stopColor="#1453a8" /></linearGradient>
          </defs>
          <path d="M0 15C0 6 7 0 15 0c9 0 15 6 15 12 0 5-4 8-8 8-3 0-5-1-5-2s2-2 2-5c0-4-4-7-8-7C5 6 1 10 0 15z" fill="url(#edge-top)" />
          <path d="M0 15C1 9 6 6 11 6c4 0 8 3 8 7-3-3-9-1-9 4 0 6 6 9 11 8 3 0 5-2 7-4-2 5-7 9-13 9C7 30 0 23 0 15z" fill="url(#edge-low)" />
          <path d="M10 17c0-3 2-5 4-6-1 6 2 12 13 11-2 3-5 4-7 4-5 0-10-3-10-9z" fill="#134b8e" />
        </svg>
      </TaskButton>
      <TaskButton label="文件资源管理器" open>
        <svg width="28" height="24" viewBox="0 0 28 24" aria-hidden="true">
          <path d="M0 2q0-2 2-2h8l3 3h13q2 0 2 2v15H0z" fill="#e0a32e" />
          <path d="M0 7h28v15q0 1-1 1H1q-1 0-1-1z" fill="#fbd768" />
          <path d="M4 24v-8q0-3 3-3h14q3 0 3 3v8h-5v-4q0-1-1-1h-8q-1 0-1 1v4z" fill="#3f8fca" />
        </svg>
      </TaskButton>
      <TaskButton label="Photoshop"><AdobeTile name="Ps" className="border-[#3fb3d6] bg-[#071a26] text-[#d8f2ff]" /></TaskButton>
      <TaskButton label="Illustrator"><AdobeTile name="Ai" className="border-[#c25a1c] bg-[#230a04] text-[#e07b2e]" /></TaskButton>
      <TaskButton label="After Effects" active open><AdobeTile name="Ae" className="border-[#b283dd] bg-[#160428] text-[#cfa4f2]" /></TaskButton>
      <TaskButton label="会议" open>
        <svg width="30" height="30" viewBox="0 0 30 30" aria-hidden="true">
          <rect width="30" height="30" fill="#1479f0" />
          <path d="M4 20c1-4 4-9 6-9 3 0 2 8 3 8s3-8 5-8 1 8 2 8 1-4 2-4c2 0 3 2 4 5-1 1-3 1-5 1H6q-2 0-2-1z" fill="#fff" />
          <path d="M11 20l2-3M18 20l2-3" stroke="#1479f0" strokeWidth="1.2" />
        </svg>
      </TaskButton>
      <div className="ml-auto flex h-full w-[234px] shrink-0 items-center">
        <Icon w={18} h={10} vb="0 0 18 10"><path d="M1 9l8-7 8 7" /></Icon>
        <Icon w={14} h={20} vb="0 0 14 20" className="ml-3.5"><path {...solid} d="M3 0h8v14H3z" /><path d="M1 11v4h12v-4M7 15v4M4 19.200h6" strokeWidth="1.2" /></Icon>
        <Icon w={21} h={14} vb="0 0 21 14" className="ml-[13px]"><path d="M5 3.500h13v9H4V8M1 0v3M4 0v3M0 3h5v3H0zM2.500 6v4M19.500 6v4" strokeWidth="1.3" /><path {...solid} d="M7 5h10v6H7z" /></Icon>
        <Icon w={17} h={16} vb="0 0 17 16" className="ml-3"><path d="M1 15A14 14 0 0115 1M5 15A10 10 0 0115 5M9 15a6 6 0 016-6" strokeWidth="1.2" /><circle {...solid} cx="14" cy="14" r="1.800" /></Icon>
        <Icon w={21} h={18} vb="0 0 21 18" className="ml-2.5"><path d="M1 6h3l4-4v14l-4-4H1z" strokeWidth="1.2" /><path d="M11 7q1 2 0 4" strokeWidth="1.2" /><path d="M14 4q4 5 0 10M17 2q5 7 0 14" strokeWidth="1.2" opacity=".5" /></Icon>
        <span className="ml-2.5 text-[16px] font-medium">中</span>
        <div className="ml-[9px] w-[59px] shrink-0 overflow-hidden font-['Noto_Sans',sans-serif] text-[16px] leading-[23px]">
          <div className="pl-[21px]">20:59</div>
          <div>2020/11</div>
        </div>
      </div>
    </footer>
  );
}

export default function App() {
  return (
    <div className="relative flex h-screen flex-col overflow-hidden bg-black font-['Open_Sans','Noto_Sans_CJK_SC',sans-serif]">
      <TitleArea />
      <Toolbar />
      <div className="flex min-h-0 flex-1 pb-[5px]">
        <ProjectPanel />
        <div className="w-1.5 shrink-0 bg-black" />
        <CompositionPanel />
        <SidePanels />
      </div>
      <Timeline />
      <Taskbar />
      <ColorDialog />
    </div>
  );
}
